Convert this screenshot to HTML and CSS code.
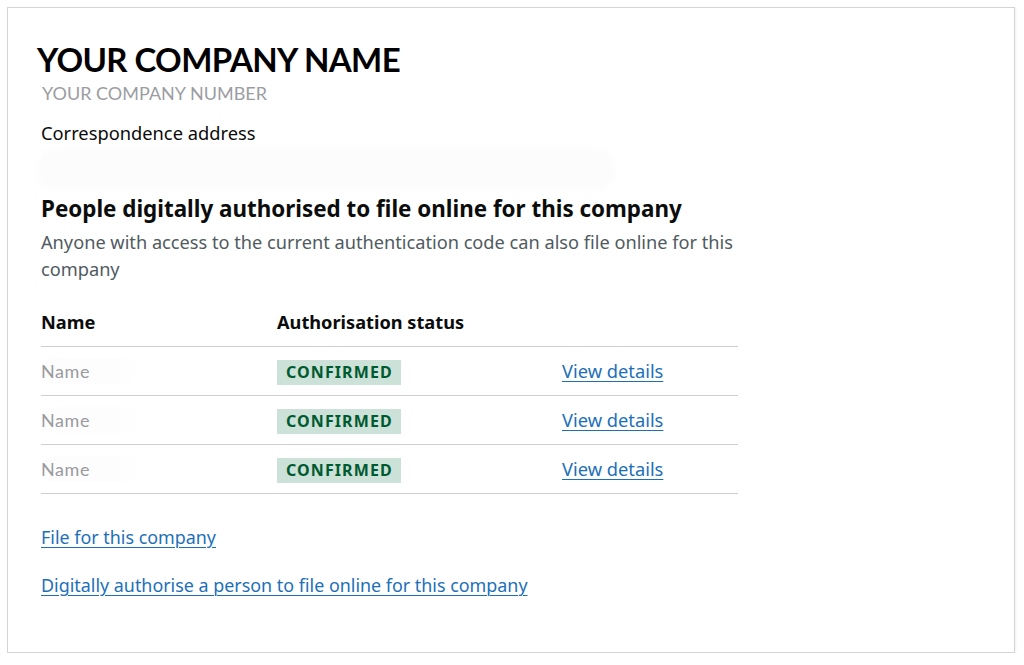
FILE: index.html
```html
<!DOCTYPE html>
<html lang="en">
<head>
<meta charset="utf-8">
<title>Company</title>
<link rel="stylesheet" href="styles.css">
</head>
<body>
<div class="frame">
  <main class="content">
    <h1 class="company-name">YOUR COMPANY NAME</h1>
    <p class="company-number">YOUR COMPANY NUMBER</p>
    <p class="address-label">Correspondence address</p>
    <div class="address-blur"></div>
    <h2 class="section-title">People digitally authorised to file online for this company</h2>
    <p class="hint">Anyone with access to the current authentication code can also file online for this company</p>
    <table class="people">
      <thead>
        <tr><th class="col-name">Name</th><th class="col-status">Authorisation status</th><th class="col-link"></th></tr>
      </thead>
      <tbody>
        <tr><td class="name-cell"><span class="name-blur">Name</span></td><td><strong class="tag">CONFIRMED</strong></td><td><a href="#" class="link">View details</a></td></tr>
        <tr><td class="name-cell"><span class="name-blur">Name</span></td><td><strong class="tag">CONFIRMED</strong></td><td><a href="#" class="link">View details</a></td></tr>
        <tr><td class="name-cell"><span class="name-blur">Name</span></td><td><strong class="tag">CONFIRMED</strong></td><td><a href="#" class="link">View details</a></td></tr>
      </tbody>
    </table>
    <ul class="actions">
      <li><a href="#" class="link action-link">File for this company</a></li>
      <li><a href="#" class="link action-link">Digitally authorise a person to file online for this company</a></li>
    </ul>
  </main>
</div>
</body>
</html>
```
FILE: styles.css
```css
html, body {
  margin: 0;
  padding: 0;
  background: #ffffff;
}
body {
  font-family: "Noto Sans", "Open Sans", Arial, sans-serif;
  color: #0b0c0c;
}
.frame {
  margin: 7px 9px 0 7px;
  height: 646px;
  border: 1px solid #d4d4d4;
  box-sizing: border-box;
  box-shadow: 1px 1px 2px rgba(0,0,0,0.06);
}
.content {
  padding: 31px 0 0 33px;
  width: 697px;
}
.company-name {
  font-family: "Lato", "Open Sans", sans-serif;
  font-weight: 700;
  font-size: 33px;
  line-height: 40px;
  letter-spacing: -0.6px;
  margin: 0 0 0 -4px;
  color: #000000;
}
.company-number {
  font-family: "Lato", "Open Sans", sans-serif;
  font-weight: 400;
  font-size: 18px;
  line-height: 24px;
  color: #9c9da2;
  margin: 2px 0 0 1px;
}
.address-label {
  font-size: 18.3px;
  line-height: 25px;
  margin: 15px 0 0 0;
}
.address-blur {
  height: 42px;
  width: 580px;
  margin: 3px 0 0 -5px;
  background: #fcfcfc;
  border-radius: 21px;
  filter: blur(3px);
}
.section-title {
  font-size: 22.4px;
  font-weight: 700;
  line-height: 30px;
  margin: 4px 0 0 0;
}
.hint {
  font-size: 18.2px;
  line-height: 27px;
  color: #505a5f;
  margin: 5px 0 0 0;
}
.people {
  border-collapse: collapse;
  width: 697px;
  margin-top: 20px;
  font-size: 18.2px;
}
.people th {
  text-align: left;
  font-weight: 700;
  padding: 7px 0 11px 0;
  line-height: 25px;
  border-bottom: 1px solid #cfcfcf;
}
.people td {
  padding: 0;
  height: 48px;
  line-height: 26px;
  border-bottom: 1px solid #cfcfcf;
  vertical-align: middle;
}
.col-name { width: 236px; }
.col-status { width: 285px; }
.name-cell {
  color: #9a9a9f;
  font-family: "Lato", "Open Sans", sans-serif;
  font-size: 18px;
  letter-spacing: 0.6px;
}
.name-blur {
  display: inline-block;
  padding: 0 50px 0 0;
  background: linear-gradient(90deg, #fdfdfd, #fdfdfd 75%, rgba(253,253,253,0));
  border-radius: 12px;
}
.tag {
  display: inline-block;
  vertical-align: middle;
  background: #cce2d8;
  color: #005a30;
  font-weight: 700;
  font-size: 16px;
  letter-spacing: 1.1px;
  line-height: 25px;
  padding: 0 8px 0 9px;
}
.link {
  color: #1d70b8;
  text-decoration: underline;
  text-underline-offset: 3px;
  text-decoration-thickness: 1px;
  font-size: 18.3px;
}
.action-link {
  font-size: 17.9px;
}
.actions {
  list-style: none;
  margin: 30px 0 0 0;
  padding: 0;
}
.actions li {
  line-height: 27px;
  margin-bottom: 20px;
}
```
